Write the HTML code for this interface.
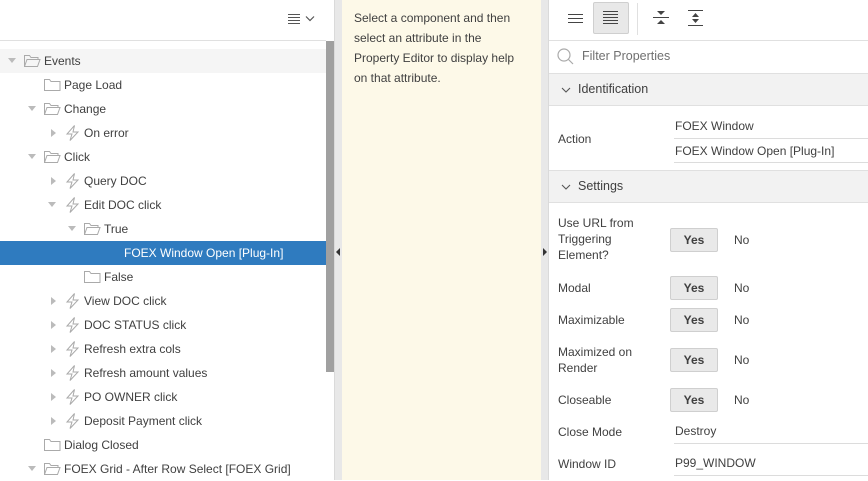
<!DOCTYPE html>
<html><head><meta charset="utf-8"><style>
*{box-sizing:border-box;margin:0;padding:0}
body{width:868px;height:480px;overflow:hidden;background:#fff;font-family:"Liberation Sans",sans-serif;font-size:12px;color:#404040;position:relative}
.a{position:absolute}
.row{position:absolute;left:0;width:326px;height:24px;line-height:24px;white-space:nowrap}
.row span{position:absolute;top:0}
.tri{position:absolute;top:0}
.lbl{position:absolute;left:558px;line-height:16px}
.yes{position:absolute;left:670px;width:48px;height:24px;background:#e9e9e9;border:1px solid #cfcfcf;border-radius:2px;font-weight:bold;text-align:center;line-height:22px;color:#404040}
.no{position:absolute;left:734px}
.val{position:absolute;left:675px}
.ul{position:absolute;left:674px;width:194px;height:1px;background:#dcdcdc}
.hdr{position:absolute;left:549px;width:319px;height:33px;background:#f2f2f2;border-top:1px solid #e0e0e0;border-bottom:1px solid #e0e0e0;line-height:31px;font-size:12.5px}
</style></head><body>
<div class="a" style="left:0;top:0;width:326px;height:41px;border-bottom:1px solid #e0e0e0"></div>
<svg class="a" style="left:287px;top:12px" width="30" height="14"><g stroke="#555" stroke-width="1"><line x1="1" y1="2.5" x2="13" y2="2.5"/><line x1="1" y1="5.5" x2="13" y2="5.5"/><line x1="1" y1="8.5" x2="13" y2="8.5"/><line x1="1" y1="11.5" x2="13" y2="11.5"/></g><path d="M19 4.5l4 4 4-4" fill="none" stroke="#555" stroke-width="1.2"/></svg>
<div class="a" style="left:0;top:49px;width:326px;height:24px;background:#f5f5f5"></div>
<div class="a" style="left:0;top:241px;width:326px;height:24px;background:#2f7bbf"></div>
<div id="tree"></div>
<div class="a" style="left:326px;top:41px;width:8px;height:331px;background:#a0a0a0"></div>
<div class="a" style="left:334px;top:0;width:8px;height:480px;background:#e8e8e8;border-left:1px solid #dadada"></div>
<svg class="a" style="left:336px;top:248px" width="5" height="8"><path d="M4 0L0 4 4 8z" fill="#333"/></svg>
<div class="a" style="left:342px;top:0;width:199px;height:480px;background:#fdf9e8"></div>
<div class="a" style="left:354px;top:8px;width:168px;line-height:20px;color:#404040">Select a component and then select an attribute in the Property Editor to display help on that attribute.</div>
<div class="a" style="left:541px;top:0;width:8px;height:480px;background:#e8e8e8;border-right:1px solid #dadada"></div>
<svg class="a" style="left:543px;top:248px" width="5" height="8"><path d="M0 0L4 4 0 8z" fill="#333"/></svg>
<div class="a" style="left:549px;top:0;width:319px;height:41px;border-bottom:1px solid #e0e0e0"></div>
<svg class="a" style="left:566px;top:10px" width="20" height="16"><g stroke="#444"><line x1="2" y1="4.5" x2="17" y2="4.5"/><line x1="2" y1="8.5" x2="17" y2="8.5"/><line x1="2" y1="12.5" x2="17" y2="12.5"/></g></svg>
<div class="a" style="left:593px;top:2px;width:36px;height:32px;background:#e8e8e8;border:1px solid #cfcfcf;border-radius:2px"></div>
<svg class="a" style="left:601px;top:8px" width="20" height="20"><g stroke="#444"><line x1="2" y1="3.5" x2="17" y2="3.5"/><line x1="2" y1="6.5" x2="17" y2="6.5"/><line x1="2" y1="9.5" x2="17" y2="9.5"/><line x1="2" y1="12.5" x2="17" y2="12.5"/><line x1="2" y1="15.5" x2="17" y2="15.5"/></g></svg>
<div class="a" style="left:637px;top:3px;width:1px;height:32px;background:#e0e0e0"></div>
<svg class="a" style="left:652px;top:9px" width="20" height="18"><line x1="1" y1="8.5" x2="17" y2="8.5" stroke="#444"/><path d="M5 2h8l-4 4z M5 15h8l-4-4z" fill="#444"/></svg>
<svg class="a" style="left:686px;top:9px" width="20" height="18"><line x1="2" y1="1.5" x2="17" y2="1.5" stroke="#444"/><line x1="2" y1="16.5" x2="17" y2="16.5" stroke="#444"/><path d="M6 8h7l-3.5-4z M6 10h7l-3.5 4z" fill="#444"/></svg>
<svg class="a" style="left:557px;top:48px" width="18" height="18"><circle cx="7" cy="7" r="6" fill="none" stroke="#aaa" stroke-width="1.2"/><line x1="11.5" y1="11.5" x2="16" y2="16" stroke="#aaa" stroke-width="1.2"/></svg>
<div class="a" style="left:582px;top:49px;color:#707070;font-size:12.5px">Filter Properties</div>
<div class="hdr" style="top:73px"><svg class="a" style="left:12px;top:12px" width="10" height="8"><path d="M1 2l4 4 4-4" fill="none" stroke="#555" stroke-width="1.1"/></svg><span class="a" style="left:29px">Identification</span></div>
<div class="lbl" style="top:131px">Action</div>
<div class="val" style="top:119px">FOEX Window</div><div class="ul" style="top:138px"></div>
<div class="val" style="top:144px">FOEX Window Open [Plug-In]</div><div class="ul" style="top:162px"></div>
<div class="hdr" style="top:170px"><svg class="a" style="left:12px;top:12px" width="10" height="8"><path d="M1 2l4 4 4-4" fill="none" stroke="#555" stroke-width="1.1"/></svg><span class="a" style="left:29px">Settings</span></div>
<div class="lbl" style="top:215px">Use URL from<br>Triggering<br>Element?</div>
<div class="yes" style="top:228px">Yes</div><div class="no" style="top:233px">No</div>
<div class="lbl" style="top:280px">Modal</div>
<div class="yes" style="top:276px">Yes</div><div class="no" style="top:281px">No</div>
<div class="lbl" style="top:312px">Maximizable</div>
<div class="yes" style="top:308px">Yes</div><div class="no" style="top:313px">No</div>
<div class="lbl" style="top:344px">Maximized on<br>Render</div>
<div class="yes" style="top:348px">Yes</div><div class="no" style="top:353px">No</div>
<div class="lbl" style="top:392px">Closeable</div>
<div class="yes" style="top:388px">Yes</div><div class="no" style="top:393px">No</div>
<div class="lbl" style="top:424px">Close Mode</div>
<div class="val" style="top:424px">Destroy</div><div class="ul" style="top:443px"></div>
<div class="lbl" style="top:456px">Window ID</div>
<div class="val" style="top:456px">P99_WINDOW</div><div class="ul" style="top:475px"></div>
<script>
var rows=[["Events",0,"d","o"],["Page Load",1,"","f"],["Change",1,"d","o"],["On error",2,"r","b"],["Click",1,"d","o"],["Query DOC",2,"r","b"],["Edit DOC click",2,"d","b"],["True",3,"d","o"],["FOEX Window Open [Plug-In]",4,"",""],["False",3,"","f"],["View DOC click",2,"r","b"],["DOC STATUS click",2,"r","b"],["Refresh extra cols",2,"r","b"],["Refresh amount values",2,"r","b"],["PO OWNER click",2,"r","b"],["Deposit Payment click",2,"r","b"],["Dialog Closed",1,"","f"],["FOEX Grid - After Row Select [FOEX Grid]",1,"d","o"]];
var h="";
rows.forEach(function(r,i){var t=49+24*i,L=r[1],x=20*L,sel=i==8;
h+='<div class="row" style="top:'+t+'px;color:'+(sel?'#fff':'#404040')+'">';
if(r[2]=="d")h+='<svg class="tri" style="left:'+(8+x)+'px;top:8px" width="9" height="8"><path d="M0 1h8l-4 5z" fill="#bbb"/></svg>';
if(r[2]=="r")h+='<svg class="tri" style="left:'+(10+x)+'px;top:8px" width="8" height="9"><path d="M1 0v8l5-4z" fill="#bbb"/></svg>';
var ix=24+x;
if(r[3]=="f")h+='<svg class="tri" style="left:'+ix+'px;top:5px" width="17" height="14"><path d="M0.5 1.5h5l1.5 2h9v9h-15.5z" fill="none" stroke="#aaa"/></svg>';
if(r[3]=="o")h+='<svg class="tri" style="left:'+ix+'px;top:5px" width="17" height="14"><path d="M0.5 12.5v-11h5l1.5 2h7v2.5 M0.5 12.5l2.5-7h13l-2.5 7z" fill="none" stroke="#aaa"/></svg>';
if(r[3]=="b")h+='<svg class="tri" style="left:'+(ix+1)+'px;top:4px" width="15" height="16"><path d="M9.5 0.5L2 9h5l-2 6.5 8-8.5h-5z" fill="none" stroke="#aaa"/></svg>';
h+='<span style="left:'+(44+x)+'px">'+r[0]+'</span></div>';});
document.getElementById("tree").innerHTML=h;
</script>
</body></html>
